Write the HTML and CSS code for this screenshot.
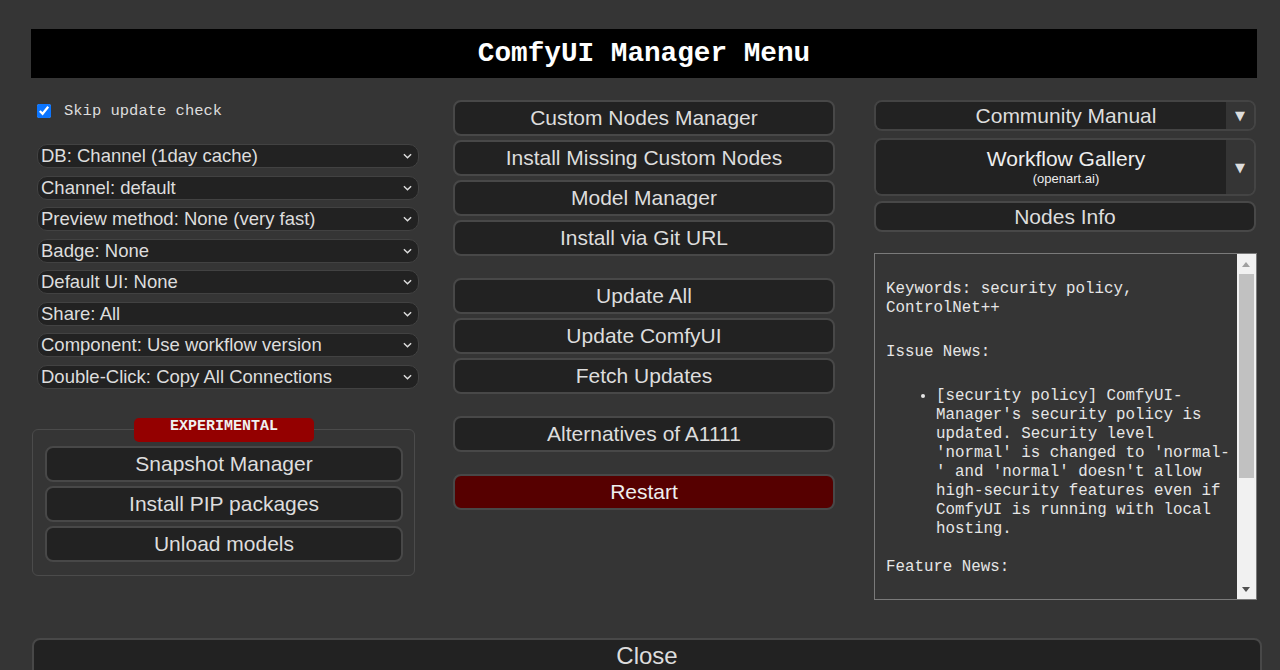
FILE: index.html
```html
<!DOCTYPE html>
<html lang="en">
<head>
<meta charset="utf-8">
<title>ComfyUI Manager Menu</title>
<link rel="stylesheet" href="styles.css">
</head>
<body>
<div class="dialog">
  <h1 class="title">ComfyUI Manager Menu</h1>
  <div class="columns">
    <div class="col col-left">
      <label class="check-row"><input type="checkbox" checked> <span>Skip update check</span></label>
      <div class="selects">
        <div class="sel"><select><option>DB: Channel (1day cache)</option></select><svg viewBox="0 0 10 6" class="chev"><path d="M1 1l4 4 4-4" fill="none" stroke="#ddd" stroke-width="1.6"/></svg></div>
        <div class="sel"><select><option>Channel: default</option></select><svg viewBox="0 0 10 6" class="chev"><path d="M1 1l4 4 4-4" fill="none" stroke="#ddd" stroke-width="1.6"/></svg></div>
        <div class="sel"><select><option>Preview method: None (very fast)</option></select><svg viewBox="0 0 10 6" class="chev"><path d="M1 1l4 4 4-4" fill="none" stroke="#ddd" stroke-width="1.6"/></svg></div>
        <div class="sel"><select><option>Badge: None</option></select><svg viewBox="0 0 10 6" class="chev"><path d="M1 1l4 4 4-4" fill="none" stroke="#ddd" stroke-width="1.6"/></svg></div>
        <div class="sel"><select><option>Default UI: None</option></select><svg viewBox="0 0 10 6" class="chev"><path d="M1 1l4 4 4-4" fill="none" stroke="#ddd" stroke-width="1.6"/></svg></div>
        <div class="sel"><select><option>Share: All</option></select><svg viewBox="0 0 10 6" class="chev"><path d="M1 1l4 4 4-4" fill="none" stroke="#ddd" stroke-width="1.6"/></svg></div>
        <div class="sel"><select><option>Component: Use workflow version</option></select><svg viewBox="0 0 10 6" class="chev"><path d="M1 1l4 4 4-4" fill="none" stroke="#ddd" stroke-width="1.6"/></svg></div>
        <div class="sel"><select><option>Double-Click: Copy All Connections</option></select><svg viewBox="0 0 10 6" class="chev"><path d="M1 1l4 4 4-4" fill="none" stroke="#ddd" stroke-width="1.6"/></svg></div>
      </div>
      <fieldset class="experimental">
        <legend class="exp-legend">EXPERIMENTAL</legend>
        <button class="btn">Snapshot Manager</button>
        <button class="btn">Install PIP packages</button>
        <button class="btn">Unload models</button>
      </fieldset>
    </div>

    <div class="col col-mid">
      <div class="group">
        <button class="btn">Custom Nodes Manager</button>
        <button class="btn">Install Missing Custom Nodes</button>
        <button class="btn">Model Manager</button>
        <button class="btn">Install via Git URL</button>
      </div>
      <div class="group">
        <button class="btn">Update All</button>
        <button class="btn">Update ComfyUI</button>
        <button class="btn">Fetch Updates</button>
      </div>
      <div class="group">
        <button class="btn">Alternatives of A1111</button>
      </div>
      <div class="group">
        <button class="btn btn-restart">Restart</button>
      </div>
    </div>

    <div class="col col-right">
      <div class="split split-small">
        <button class="split-main">Community Manual</button>
        <button class="split-arrow">&#9660;</button>
      </div>
      <div class="split split-big">
        <button class="split-main"><span class="big-label">Workflow Gallery</span><span class="sub-label">(openart.ai)</span></button>
        <button class="split-arrow">&#9660;</button>
      </div>
      <button class="btn btn-info">Nodes Info</button>
      <div class="news">
        <div class="news-text">
          <p class="news-p first">Keywords: security policy, ControlNet++</p>
          <p class="news-p">Issue News:</p>
          <ul class="news-list">
            <li>[security policy] ComfyUI-Manager's security policy is updated. Security level 'normal' is changed to 'normal-' and 'normal' doesn't allow high-security features even if ComfyUI is running with local hosting.</li>
          </ul>
          <p class="news-p last">Feature News:</p>
        </div>
        <div class="scrollbar">
          <div class="sb-btn"><svg viewBox="0 0 10 6" class="sb-arrow"><path d="M0 6L5 0L10 6Z" fill="#a0a0a0"/></svg></div>
          <div class="sb-track"><div class="sb-thumb"></div></div>
          <div class="sb-btn"><svg viewBox="0 0 10 6" class="sb-arrow"><path d="M0 0L5 6L10 0Z" fill="#505050"/></svg></div>
        </div>
      </div>
    </div>
  </div>
  <button class="btn btn-close">Close</button>
</div>
</body>
</html>
```

FILE: styles.css
```css
html, body {
  margin: 0;
  padding: 0;
  background: #353535;
  height: 100%;
  overflow: hidden;
}

.dialog {
  width: 1226px;
  padding: 29px 0 0 31px;
  font-family: "Liberation Sans", Arial, sans-serif;
  color: #ddd;
}

.title {
  margin: 0;
  height: 49px;
  line-height: 49px;
  background: #000;
  color: #fff;
  text-align: center;
  font-family: "Liberation Mono", "DejaVu Sans Mono", monospace;
  font-size: 27.7px;
  font-weight: bold;
}

.columns {
  display: grid;
  grid-template-columns: repeat(3, 1fr);
  align-items: start;
  margin-top: 22px;
}

.col {
  display: flex;
  flex-direction: column;
}

/* left column */
.col-left {
  padding-left: 6px;
}

.check-row {
  display: flex;
  align-items: center;
  height: 20px;
  margin-top: 1px;
  font-family: "Liberation Mono", "DejaVu Sans Mono", monospace;
  font-size: 15.5px;
  color: #ddd;
  gap: 13px;
}

.check-row input {
  margin: 0;
  width: 14px;
  height: 14px;
  accent-color: #0b75ff;
}

.selects {
  margin-top: 23px;
  display: flex;
  flex-direction: column;
  gap: 7.5px;
  width: 382px;
}

.sel {
  display: grid;
  align-items: center;
}

.sel select,
.sel .chev {
  grid-area: 1 / 1;
}

.sel select {
  appearance: none;
  -webkit-appearance: none;
  height: 24px;
  margin: 0;
  padding: 0 0 0 3px;
  background: #222;
  border: 1.5px solid #424242;
  border-radius: 10px;
  color: #ddd;
  font-family: "Liberation Sans", Arial, sans-serif;
  font-size: 18.5px;
  line-height: 20px;
  outline: none;
}

.sel .chev {
  justify-self: end;
  width: 9px;
  height: 6px;
  margin-right: 7px;
  pointer-events: none;
}

.experimental {
  margin: 29px 0 0 -5px;
  width: 383px;
  box-sizing: border-box;
  border: 1px solid #4b4b4b;
  border-radius: 6px;
  padding: 4px 11px 13px 12px;
  display: flex;
  flex-direction: column;
  gap: 4px;
}

.exp-legend {
  margin: 0 auto;
  width: 180px;
  height: 24px;
  box-sizing: border-box;
  background: #940000;
  color: #f0f0f0;
  border-radius: 5px;
  text-align: center;
  font-family: "Liberation Mono", "DejaVu Sans Mono", monospace;
  font-size: 15px;
  font-weight: bold;
  line-height: 17px;
  padding: 0;
}

.btn {
  display: block;
  width: 100%;
  height: 36px;
  margin: 0;
  padding: 0;
  box-sizing: border-box;
  background: #222;
  border: 2px solid #484848;
  border-radius: 8px;
  color: #ddd;
  font-family: "Liberation Sans", Arial, sans-serif;
  font-size: 21px;
  line-height: 30px;
  text-align: center;
}

.experimental .btn {
  width: 358px;
}

/* middle column */
.col-mid {
  align-items: center;
  gap: 22px;
}

.group {
  display: flex;
  flex-direction: column;
  gap: 4px;
  width: 382px;
}

.btn-restart {
  background: #560000;
  color: #eee;
}

/* right column */
.col-right {
  align-items: flex-end;
}

.split {
  display: flex;
  width: 382px;
  box-sizing: border-box;
  border: 2px solid #444;
  border-radius: 8px;
  overflow: hidden;
  margin-right: 1px;
  background: #333;
}

.split-small {
  height: 31px;
}

.split-big {
  height: 58px;
  margin-top: 7px;
}

.split-main {
  flex: 1;
  margin: 0;
  padding: 0 0 0 30px;
  background: #222;
  border: none;
  color: #ddd;
  font-family: "Liberation Sans", Arial, sans-serif;
  font-size: 21px;
  line-height: 29px;
  display: flex;
  flex-direction: column;
  align-items: center;
  justify-content: center;
}

.big-label {
  font-size: 21px;
  line-height: 24px;
  color: #eee;
}

.sub-label {
  font-size: 13px;
  line-height: 16px;
  color: #eee;
}

.split-arrow {
  width: 28px;
  margin: 0;
  padding: 0;
  background: #353535;
  border: none;
  color: #ddd;
  font-size: 13px;
  font-family: "DejaVu Sans", sans-serif;
}

.btn-info {
  width: 382px;
  height: 31px;
  margin-top: 5px;
  margin-right: 1px;
  line-height: 26px;
}

.news {
  margin-top: 21px;
  width: 383px;
  height: 347px;
  box-sizing: border-box;
  border: 1px solid #7a7a7a;
  display: flex;
  background: #353535;
}

.news-text {
  flex: 1;
  overflow: hidden;
  padding: 0 3px 0 11px;
  font-family: "Liberation Mono", "DejaVu Sans Mono", monospace;
  font-size: 15.8px;
  line-height: 19px;
  color: #e6e6e6;
}

.news-p {
  margin: 25px 0;
}

.news-p.first {
  margin-top: 26px;
}

.news-list {
  margin: 25px 0 19px;
  padding-left: 50px;
}

.news-p.last {
  margin-top: 19px;
}

.scrollbar {
  width: 19px;
  background: #f1f1f1;
  display: flex;
  flex-direction: column;
}

.sb-btn {
  height: 20px;
  display: flex;
  align-items: center;
  justify-content: center;
}

.sb-arrow {
  width: 8px;
  height: 5px;
}

.sb-track {
  flex: 1;
  padding: 0 2px;
}

.sb-thumb {
  height: 204px;
  background: #c1c1c1;
}

.btn-close {
  margin: 38px 0 0 1px;
  width: 1230px;
  height: 44px;
  padding-bottom: 8px;
  font-size: 24px;
  line-height: 28px;
  color: #ddd;
}
```
